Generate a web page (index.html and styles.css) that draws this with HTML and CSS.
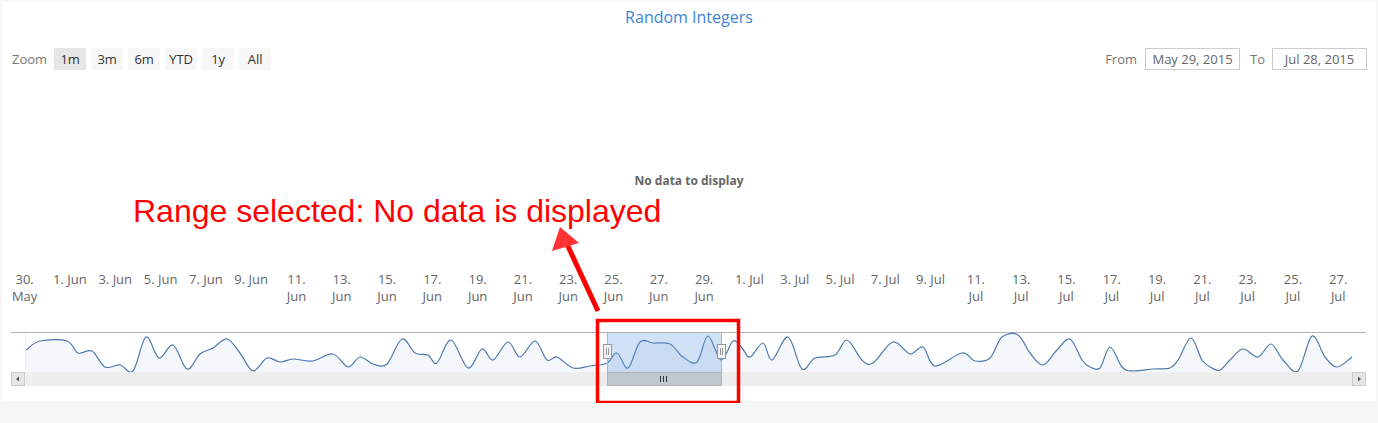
FILE: index.html
```html
<!DOCTYPE html>
<html lang="en">
<head>
  <meta charset="UTF-8">
  <title>Random Integers</title>
  <link rel="stylesheet" href="styles.css">
</head>
<body>
  <div class="chart">
    <div class="title">Random Integers</div>

    <div class="toolbar">
      <div class="zoom">
        <span class="label">Zoom</span>
        <span class="btn active">1m</span>
        <span class="btn">3m</span>
        <span class="btn">6m</span>
        <span class="btn">YTD</span>
        <span class="btn">1y</span>
        <span class="btn">All</span>
      </div>
      <div class="range">
        <span class="label">From</span>
        <span class="date">May 29, 2015</span>
        <span class="label to">To</span>
        <span class="date">Jul 28, 2015</span>
      </div>
    </div>

    <div class="no-data">No data to display</div>

    <div class="axis">
      <span>30.<br>May</span><span>1. Jun</span><span>3. Jun</span><span>5. Jun</span><span>7. Jun</span>
      <span>9. Jun</span><span>11.<br>Jun</span><span>13.<br>Jun</span><span>15.<br>Jun</span><span>17.<br>Jun</span>
      <span>19.<br>Jun</span><span>21.<br>Jun</span><span>23.<br>Jun</span><span>25.<br>Jun</span><span>27.<br>Jun</span>
      <span>29.<br>Jun</span><span>1. Jul</span><span>3. Jul</span><span>5. Jul</span><span>7. Jul</span>
      <span>9. Jul</span><span>11.<br>Jul</span><span>13.<br>Jul</span><span>15.<br>Jul</span><span>17.<br>Jul</span>
      <span>19.<br>Jul</span><span>21.<br>Jul</span><span>23.<br>Jul</span><span>25.<br>Jul</span><span>27.<br>Jul</span>
    </div>

    <!-- navigator + scrollbar, drawn in page coordinates -->
    <svg class="navigator" width="1356" height="56" viewBox="11 331 1356 56">
      <path id="nav-fill" fill="#f5f7fb" d=""></path>
      <line x1="25.5" y1="333" x2="25.5" y2="372" stroke="#eeeeee"></line>
      <line x1="11" y1="332.5" x2="1366" y2="332.5" stroke="#b3b3b3"></line>
      <path id="nav-line" fill="none" stroke="#4f78ad" stroke-width="1.2" d=""></path>

      <rect x="11" y="372" width="1355" height="14" fill="#eeeeee"></rect>
      <rect x="11.5" y="372.5" width="13" height="13" fill="#e6e6e6" stroke="#cccccc"></rect>
      <path d="M16 379 L19 376.5 L19 381.5 Z" fill="#555"></path>
      <rect x="1352.5" y="372.5" width="13" height="13" fill="#e6e6e6" stroke="#cccccc"></rect>
      <path d="M1361 379 L1358 376.5 L1358 381.5 Z" fill="#555"></path>

      <rect x="607" y="333" width="115" height="39" fill="rgba(102,160,225,0.3)"></rect>
      <rect x="607.5" y="372.5" width="114" height="13" fill="#bfc7d1" stroke="#b2b2b2"></rect>
      <path d="M660.5 376 V382 M663.5 376 V382 M666.5 376 V382" stroke="#333"></path>
      <path d="M607.5 332 V372 M721.5 332 V372" stroke="#b2b2b2"></path>

      <rect x="603.5" y="344.5" width="8" height="14" fill="#f2f2f2" stroke="#999"></rect>
      <path d="M606.5 348 V355 M608.5 348 V355" stroke="#999"></path>
      <rect x="717.5" y="344.5" width="8" height="14" fill="#f2f2f2" stroke="#999"></rect>
      <path d="M720.5 348 V355 M722.5 348 V355" stroke="#999"></path>
    </svg>

    <div class="note">Range selected: No data is displayed</div>
    <svg class="marks" width="1374" height="410" viewBox="2 2 1374 410">
      <line x1="598" y1="311" x2="566" y2="242" stroke="#ff0000" stroke-width="5"></line>
      <path d="M560 227 L552 251 L579 243 Z" fill="#ff3333"></path>
      <rect x="597.5" y="320.5" width="141" height="82" fill="none" stroke="#ff0000" stroke-width="3.5"></rect>
    </svg>
  </div>

  <script>
    // navigator series, smoothed with catmull-rom
    var pts = [
      [26,350],[40,341],[67,341],[78,353],[92,351],[105,367],[120,365],[133,371],[146,337],[159,358],
      [173,345],[187,369],[200,354],[213,348],[227,339],[240,353],[253,371],[267,358],[280,362],[293,359],
      [312,361],[333,354],[348,367],[360,357],[373,364],[387,364],[402,339],[415,353],[428,355],[437,363],
      [451,340],[468,368],[482,349],[493,360],[508,342],[520,357],[535,341],[547,360],[557,357],[573,368],
      [590,366],[607,363],[617,353],[628,368],[640,342],[653,343],[670,344],[683,357],[697,362],[708,336],
      [721,360],[733,341],[742,348],[750,357],[763,343],[772,360],[788,337],[802,369],[815,358],[835,355],
      [847,340],[862,360],[873,363],[893,342],[910,354],[923,347],[935,366],[962,353],[975,361],[990,358],
      [1002,337],[1018,335],[1030,353],[1043,365],[1057,350],[1070,339],[1082,360],[1090,367],[1100,368],
      [1110,347],[1122,367],[1133,371],[1153,369],[1170,368],[1178,360],[1191,338],[1202,360],[1212,368],
      [1220,370],[1230,360],[1243,349],[1258,357],[1271,344],[1283,360],[1298,371],[1312,336],[1325,357],
      [1337,367],[1352,357]
    ];
    var d = 'M' + pts[0][0] + ' ' + pts[0][1];
    for (var i = 0; i < pts.length - 1; i++) {
      var p0 = pts[i - 1] || pts[i], p1 = pts[i], p2 = pts[i + 1], p3 = pts[i + 2] || p2;
      var c1x = p1[0] + (p2[0] - p0[0]) / 6, c1y = p1[1] + (p2[1] - p0[1]) / 6;
      var c2x = p2[0] - (p3[0] - p1[0]) / 6, c2y = p2[1] - (p3[1] - p1[1]) / 6;
      d += ' C' + c1x.toFixed(1) + ' ' + c1y.toFixed(1) + ' ' + c2x.toFixed(1) + ' ' + c2y.toFixed(1) + ' ' + p2[0] + ' ' + p2[1];
    }
    document.getElementById('nav-line').setAttribute('d', d);
    document.getElementById('nav-fill').setAttribute('d', d + ' L1352 372 L26 372 Z');
  </script>
</body>
</html>
```

FILE: styles.css
```css
body {
  margin: 0;
  background-color: #f7f7f7;
  font-family: "Open Sans", Arial, sans-serif;
}
.chart {
  position: relative;
  margin: 2px;
  width: 1374px;
  height: 399px;
  background-color: #fff;
}
.title {
  padding-top: 5px;
  height: 20px;
  line-height: 20px;
  text-align: center;
  font-size: 16px;
  color: #3d85d6;
}
.toolbar {
  display: flex;
  justify-content: space-between;
  margin-top: 21px;
  height: 22px;
  padding: 0 9px 0 10px;
}
.zoom, .range {
  display: flex;
  align-items: center;
  font-size: 13px;
}
.zoom .label {
  color: #777;
  margin-right: 7px;
  line-height: 20px;
}
.btn {
  width: 32px;
  height: 22px;
  line-height: 22px;
  margin-right: 5px;
  text-align: center;
  background-color: #f7f7f7;
  color: #333;
}
.btn.active {
  background-color: #e6e6e6;
}
.range .label {
  color: #777;
  margin-right: 8px;
}
.range .to {
  margin-left: 10px;
  margin-right: 7px;
}
.date {
  box-sizing: border-box;
  width: 95px;
  height: 22px;
  line-height: 20px;
  border: 1px solid #ccc;
  text-align: center;
  color: #666;
}
.no-data {
  margin-top: 103px;
  height: 16px;
  line-height: 16px;
  text-align: center;
  font-size: 12px;
  font-weight: bold;
  color: #666;
}
.axis {
  display: grid;
  grid-template-columns: repeat(30, 45.3px);
  margin-top: 82px;
  height: 34px;
  font-size: 13px;
  line-height: 17px;
  color: #666;
  text-align: center;
  white-space: nowrap;
}
.navigator {
  display: block;
  margin: 26px 0 0 9px;
}
.note {
  position: absolute;
  left: 131px;
  top: 193px;
  font-family: "Liberation Sans", Arial, sans-serif;
  font-size: 32px;
  line-height: 32px;
  color: #ff0000;
}
.marks {
  position: absolute;
  left: 0;
  top: 0;
}
```
